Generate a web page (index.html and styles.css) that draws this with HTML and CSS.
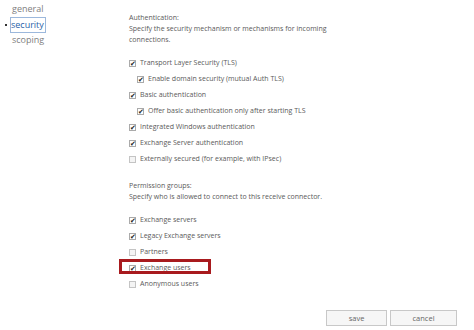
FILE: index.html
```html
<!DOCTYPE html>
<html>
<head>
    <meta charset="UTF-8">
    <title>receive connector - security</title>
    <link rel="stylesheet" href="styles.css">
</head>
<body>
    <div class="page">
        <div class="main">
            <ul class="nav">
                <li>general</li>
                <li class="active"><span>security</span></li>
                <li>scoping</li>
            </ul>

            <div class="content">
                <div class="section">
                    <p class="label">Authentication:</p>
                    <p class="desc">Specify the security mechanism or mechanisms for incoming connections.</p>
                </div>

                <ul class="checks">
                    <li class="checked">Transport Layer Security (TLS)</li>
                    <li class="checked sub">Enable domain security (mutual Auth TLS)</li>
                    <li class="checked">Basic authentication</li>
                    <li class="checked sub">Offer basic authentication only after starting TLS</li>
                    <li class="checked">Integrated Windows authentication</li>
                    <li class="checked">Exchange Server authentication</li>
                    <li>Externally secured (for example, with IPsec)</li>
                </ul>

                <div class="section">
                    <p class="label">Permission groups:</p>
                    <p class="desc">Specify who is allowed to connect to this receive connector.</p>
                </div>

                <ul class="checks">
                    <li class="checked">Exchange servers</li>
                    <li class="checked">Legacy Exchange servers</li>
                    <li>Partners</li>
                    <li class="checked marked">Exchange users</li>
                    <li>Anonymous users</li>
                </ul>
            </div>
        </div>

        <div class="footer">
            <button class="save">save</button>
            <button class="cancel">cancel</button>
        </div>
    </div>
</body>
</html>
```

FILE: styles.css
```css
html,
body {
    margin: 0;
    padding: 0;
    height: 100%;
}

body {
    font-family: "Open Sans", "Noto Sans", Arial, sans-serif;
    background: #fff;
    color: #5a5a5a;
    font-size: 7px;
}

.page {
    display: flex;
    flex-direction: column;
    height: 100%;
}

.main {
    display: flex;
    flex-grow: 1;
    min-height: 0;
}

ul {
    list-style: none;
    margin: 0;
    padding: 0;
}

p {
    margin: 0;
}

/* left navigation */
.nav {
    width: 129px;
    flex-shrink: 0;
    padding-top: 1px;
    font-size: 9px;
    color: #808080;
}

.nav li {
    height: 15.5px;
    line-height: 15.5px;
    padding-left: 12px;
    position: relative;
}

.nav .active span {
    color: #2a5fa8;
    border: 1px solid #9cb8dc;
    padding: 0 1px 1px 0;
    margin-left: -2px;
}

.nav .active::before {
    content: "";
    position: absolute;
    left: 5px;
    top: 7px;
    width: 2px;
    height: 2px;
    background: #333;
}

/* right pane */
.content {
    padding-top: 12px;
}

.section .label,
.section .desc {
    line-height: 11px;
}

.section .desc {
    width: 210px;
}

.checks {
    padding: 10px 0 13px;
}

.checks li {
    height: 16px;
    line-height: 16px;
    display: flex;
    align-items: center;
    position: relative;
}

.checks li::before {
    content: "";
    width: 7px;
    height: 7px;
    border: 1px solid #c4c4c4;
    background: #f4f4f4;
    margin-right: 4px;
    box-sizing: border-box;
    flex-shrink: 0;
}

.checks li.checked::before {
    content: "\2714";
    color: #222;
    font-size: 7px;
    line-height: 6px;
    text-align: center;
    background: #fff;
    border-color: #aaa;
}

.checks li.sub {
    padding-left: 8px;
}

.checks li.marked::after {
    content: "";
    position: absolute;
    left: -10px;
    top: -1px;
    width: 92px;
    height: 15px;
    border: 3px solid #a81a1e;
    box-sizing: border-box;
}

/* buttons */
.footer {
    display: flex;
    justify-content: flex-end;
    gap: 3px;
    padding: 0 17px 4px 0;
}

.footer button {
    font-family: inherit;
    font-size: 7.5px;
    color: #666;
    height: 16px;
    padding: 0;
    border: 1px solid #c8c8c8;
    background: #f6f6f6;
}

.footer .save {
    width: 61px;
}

.footer .cancel {
    width: 67px;
}
```
